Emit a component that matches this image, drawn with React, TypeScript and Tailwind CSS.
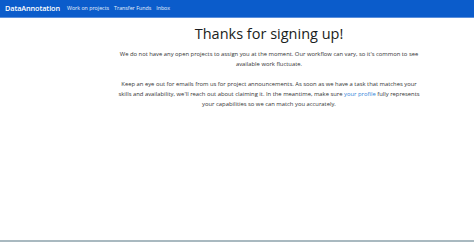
export default function App() {
  return (
    <div className="flex h-[242px] w-[474px] flex-col overflow-hidden bg-white font-['Open_Sans','Liberation_Sans',sans-serif]">
      <nav className="flex h-[18px] shrink-0 items-center border-b border-[#5b8fdc] bg-[#0b5ccb] pl-[5px]">
        <div className="text-[7.3px] font-semibold tracking-[-0.1px] text-white">DataAnnotation</div>
        <div className="ml-[7px] flex gap-[5px] text-[5.3px] text-white/90">
          <span>Work on projects</span>
          <span>Transfer Funds</span>
          <span>Inbox</span>
        </div>
      </nav>

      <main className="flex-1 pl-[64px]">
        <div className="mx-auto w-[340px] text-center text-[#212529]">
          <h1 className="mt-[5px] text-[14.5px] leading-[22px] font-medium text-[#1a1d20]">Thanks for signing up!</h1>
          <p className="mt-[4px] text-[5.85px] leading-[10px] whitespace-nowrap text-[#333]">
            We do not have any open projects to assign you at the moment. Our workflow can vary, so it's common to see
            <br />
            available work fluctuate.
          </p>
          <p className="mt-[10px] text-[5.85px] leading-[10px] whitespace-nowrap text-[#333]">
            Keep an eye out for emails from us for project announcements. As soon as we have a task that matches your
            <br />
            skills and availability, we'll reach out about claiming it. In the meantime, make sure{" "}
            <a className="text-[#2f7fd8]">your profile</a> fully represents
            <br />
            your capabilities so we can match you accurately.
          </p>
        </div>
      </main>

      <div className="h-[2px] shrink-0 bg-[#a9b9c0]" />
    </div>
  );
}
